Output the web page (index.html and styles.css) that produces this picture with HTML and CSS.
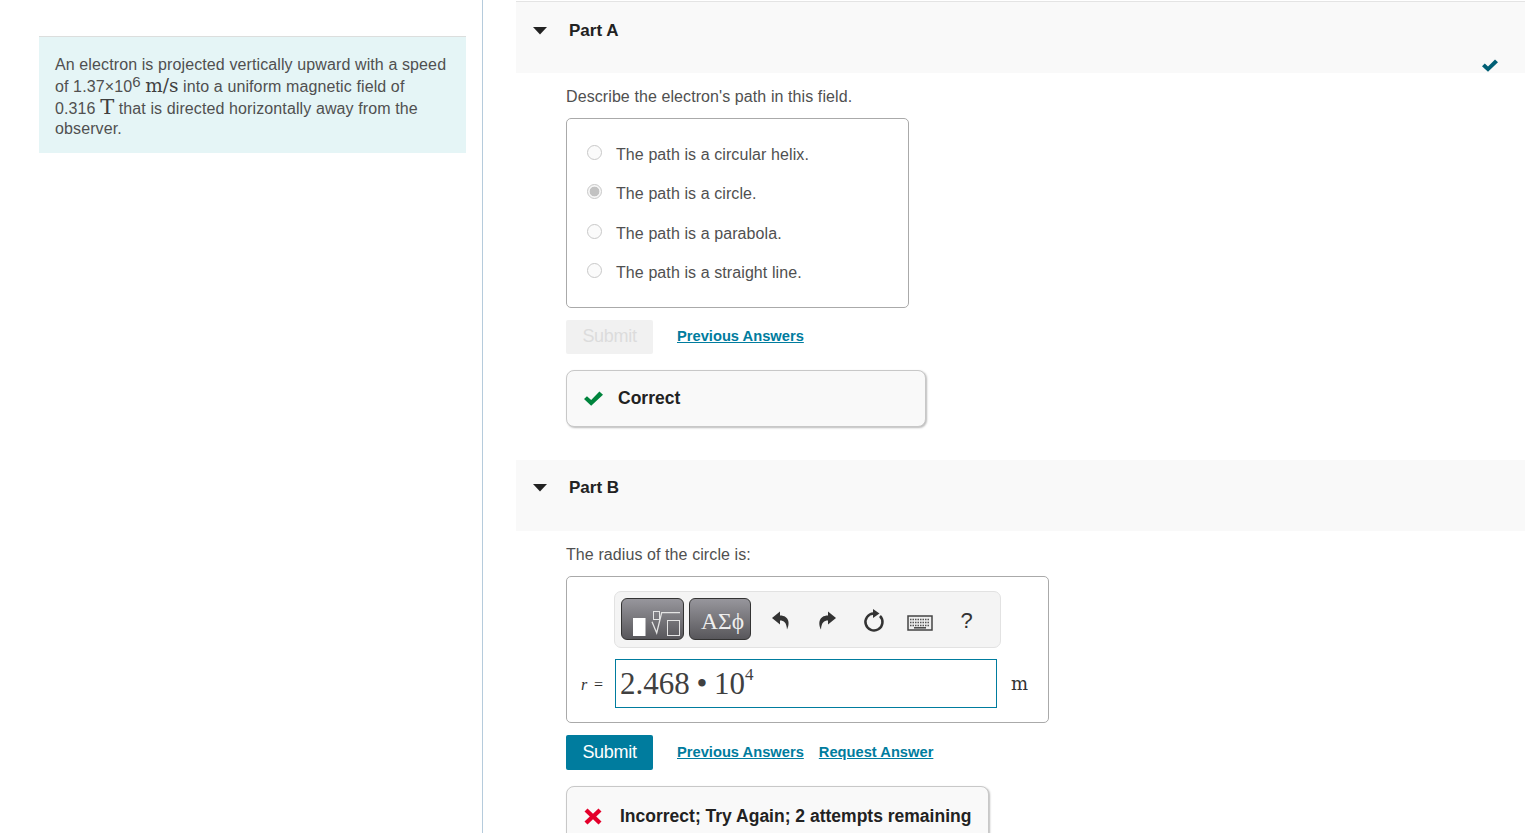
FILE: index.html
```html
<!DOCTYPE html>
<html lang="en">
<head>
<meta charset="utf-8">
<title>Electron in a magnetic field</title>
<link rel="stylesheet" href="styles.css">
</head>
<body>
<div class="page">
  <aside class="intro-col">
    <div class="intro">An electron is projected vertically upward with a speed of 1.37×10<span class="pow">6</span> <span class="unit">m/s</span> into a uniform magnetic field of 0.316 <span class="unit tall">T</span> that is directed horizontally away from the observer.</div>
  </aside>
  <main class="parts">
    <section class="part part-a">
      <header class="part-head">
        <svg class="caret" viewBox="0 0 14 8"><path d="M0 0H14L7 7.500Z"/></svg>
        <h2 class="part-title">Part A</h2>
        <svg class="done" viewBox="0 0 16 13"><path d="M0 7.200L2.800 4.400L6 7.400L13 0.400L16 3.200L6 12.800Z"/></svg>
      </header>
      <div class="part-body">
        <p class="prompt">Describe the electron's path in this field.</p>
        <div class="choices">
          <div class="choice"><span class="radio"></span><span>The path is a circular helix.</span></div>
          <div class="choice"><span class="radio on"></span><span>The path is a circle.</span></div>
          <div class="choice"><span class="radio"></span><span>The path is a parabola.</span></div>
          <div class="choice"><span class="radio"></span><span>The path is a straight line.</span></div>
        </div>
        <div class="actions">
          <span class="btn btn-off">Submit</span>
          <a class="link" href="#">Previous Answers</a>
        </div>
        <div class="feedback ok">
          <svg class="fb-icon" viewBox="0 0 18 14"><path d="M0 7.500L2.800 4.800L6.800 8.400L14.600 0.400L18 3.400L6.800 13.800Z"/></svg>
          <span>Correct</span>
        </div>
      </div>
    </section>
    <section class="part part-b">
      <header class="part-head">
        <svg class="caret" viewBox="0 0 14 8"><path d="M0 0H14L7 7.500Z"/></svg>
        <h2 class="part-title">Part B</h2>
      </header>
      <div class="part-body">
        <p class="prompt">The radius of the circle is:</p>
        <div class="answer">
          <div class="toolbar">
            <span class="tool tool-tpl">
              <svg class="tpl-icon" viewBox="0 0 48 26">
                <rect x="0" y="7" width="12.500" height="18" fill="#fff"/>
                <rect x="20.500" y="0.500" width="6" height="8" fill="none" stroke="#e4e4e4"/>
                <path d="M19 10.700L23.700 22L28.700 1.700H47" fill="none" stroke="#e4e4e4" stroke-width="1.300"/>
                <rect x="34.500" y="9.500" width="12" height="15" fill="none" stroke="#e4e4e4"/>
              </svg>
            </span>
            <span class="tool tool-sym">ΑΣϕ</span>
            <span class="icons">
              <span class="ico"><svg width="18" height="19" viewBox="0 0 18 19"><path d="M8 0.500L0 7L8 13.500V9.500C12 9.500 14.500 11.500 15 18.500C18 13 17.500 4.500 8 4.500Z"/></svg></span>
              <span class="ico"><svg width="18" height="19" viewBox="0 0 18 19"><path d="M10 0.500L18 7L10 13.500V9.500C6 9.500 3.500 11.500 3 18.500C0 13 0.500 4.500 10 4.500Z"/></svg></span>
              <span class="ico"><svg width="22" height="24" viewBox="0 0 22 24"><path d="M17 7A8.500 8.500 0 1 1 10.500 4.500" fill="none" stroke="#333" stroke-width="2.500"/><path d="M10 0L16.500 4.500L10 9Z"/></svg></span>
              <span class="ico ico-kbd"><svg width="26" height="16" viewBox="0 0 26 16"><rect x="1" y="1" width="24" height="14" fill="#eee" stroke="#444" stroke-width="1.500"/><path d="M3 4.500H23M3 7.500H23M3 10.500H23" fill="none" stroke="#555" stroke-width="1.500" stroke-dasharray="1.500 1"/><path d="M7 12.800H19" stroke="#444" stroke-width="1.500"/></svg></span>
              <span class="ico ico-help">?</span>
            </span>
          </div>
          <div class="answer-row">
            <span class="var"><i>r</i> =</span>
            <div class="input">2.468 • 10<span class="exp">4</span></div>
            <span class="answer-unit">m</span>
          </div>
        </div>
        <div class="actions actions-b">
          <span class="btn btn-on">Submit</span>
          <a class="link" href="#">Previous Answers</a>
          <a class="link" href="#">Request Answer</a>
        </div>
        <div class="feedback bad">
          <svg class="fb-icon" viewBox="0 0 18 17"><path d="M0.500 3.500L3.500 0.500L9 5.800L14.500 0.500L17.500 3.500L12.200 8.500L17.500 13.500L14.500 16.500L9 11.200L3.500 16.500L0.500 13.500L5.800 8.500Z"/></svg>
          <span>Incorrect; Try Again; 2 attempts remaining</span>
        </div>
      </div>
    </section>
  </main>
</div>
</body>
</html>
```
FILE: styles.css
```css
html, body {
  margin: 0;
  height: 100%;
  overflow: hidden;
  background: #fff;
}
body {
  font-family: "Liberation Sans", Arial, sans-serif;
  font-size: 16px;
  color: #505050;
  letter-spacing: 0.09px;
}
.page {
  display: flex;
  height: 833px;
  overflow: hidden;
}
.intro-col {
  box-sizing: border-box;
  width: 483px;
  flex: none;
  padding: 36px 16px 0 39px;
  border-right: 1px solid #b5cbdc;
}
.intro {
  background: #e5f5f6;
  border-top: 1px solid #dcdedd;
  padding: 18px 19px 14px 16px;
  line-height: 20px;
  height: 84px;
  letter-spacing: 0.11px;
}
.pow {
  display: inline-block;
  font-size: 15px;
  line-height: 14px;
  vertical-align: 5px;
}
.unit {
  font-family: "DejaVu Serif", serif;
  font-size: 18.500px;
  line-height: 14px;
  letter-spacing: 0;
  color: #3f3f3f;
}
.tall {
  display: inline-block;
  line-height: 20px;
  font-size: 21px;
}
.parts {
  flex: none;
  width: 1009px;
  margin-left: 33px;
}
.part-head {
  position: relative;
  display: flex;
  align-items: flex-start;
  background: #f9f9f9;
  height: 71px;
}
.part-a .part-head {
  border-top: 1px solid #e4e4e4;
  margin-top: 1px;
}
.part-b {
  margin-top: 33px;
}
.caret {
  width: 14px;
  height: 8px;
  margin: 25px 0 0 17px;
  fill: #222;
}
.part-title {
  margin: 18px 0 0 22px;
  font-size: 17px;
  line-height: 22px;
  font-weight: bold;
  letter-spacing: 0;
  color: #222;
}
.part-b .part-title {
  margin-top: 17px;
}
.part-b .caret {
  margin-top: 24px;
}
.done {
  position: absolute;
  right: 27px;
  top: 57px;
  width: 16px;
  height: 13px;
  fill: #005f75;
}
.part-body {
  padding-left: 50px;
}
.prompt {
  margin: 0;
  padding-top: 14px;
  line-height: 20px;
  height: 31px;
}
.choices {
  box-sizing: border-box;
  width: 343px;
  height: 190px;
  padding-top: 26px;
  border: 1px solid #aaa;
  border-radius: 5px;
}
.choice {
  display: flex;
  align-items: flex-start;
  height: 39.330px;
  padding-left: 20px;
  line-height: 20px;
  gap: 14px;
}
.radio {
  box-sizing: border-box;
  flex: none;
  width: 15px;
  height: 15px;
  border: 1px solid #c8c8c8;
  border-radius: 50%;
  background: #fbfbfb;
}
.radio.on {
  background: radial-gradient(circle, #c2c2c2 0 4.500px, #f6f6f6 5.200px);
}
.actions {
  display: flex;
  align-items: center;
  height: 34px;
  margin-top: 12px;
}
.btn {
  box-sizing: border-box;
  width: 87px;
  height: 34px;
  line-height: 32px;
  text-align: center;
  font-size: 18px;
  border-radius: 2px;
  margin-right: 24px;
  letter-spacing: -0.300px;
}
.btn-off {
  background: #f1f1f1;
  color: #dcdcdc;
}
.btn-on {
  background: #007c9e;
  color: #fff;
  height: 35px;
  line-height: 34px;
}
.link {
  color: #007c9e;
  font-size: 14.700px;
  font-weight: bold;
  letter-spacing: 0;
  margin-right: 15px;
  margin-bottom: 2px;
}
.feedback {
  box-sizing: border-box;
  display: flex;
  align-items: center;
  margin-top: 16px;
  height: 57px;
  width: 360px;
  padding-left: 17px;
  background: #f9f9f9;
  border: 1px solid #c8c8c8;
  border-radius: 8px;
  box-shadow: 1px 1px 2px #bbb;
  font-size: 17.500px;
  font-weight: bold;
  letter-spacing: 0;
  color: #222;
}
.ok .fb-icon {
  width: 19px;
  height: 15px;
  margin-right: 15px;
  fill: #00843d;
}
.bad {
  width: 423px;
  height: 60px;
}
.bad .fb-icon {
  width: 18px;
  height: 17px;
  margin-right: 18px;
  fill: #e4002b;
}
.answer {
  box-sizing: border-box;
  width: 483px;
  height: 147px;
  padding: 14px 0 0 47px;
  border: 1px solid #aaa;
  border-radius: 5px;
}
.toolbar {
  box-sizing: border-box;
  display: flex;
  align-items: center;
  width: 387px;
  height: 57px;
  padding: 0 0 2px 6px;
  gap: 5px;
  background: #f4f4f4;
  border: 1px solid #e2e2e2;
  border-radius: 7px;
}
.tool {
  box-sizing: border-box;
  display: flex;
  height: 42px;
  border: 1px solid #333;
  border-radius: 6px;
  background: linear-gradient(#97969c, #58575b);
}
.tool-tpl {
  width: 63px;
  padding: 12px 0 0 11px;
}
.tpl-icon {
  flex: none;
  width: 48px;
  height: 26px;
}
.tool-sym {
  width: 62px;
  padding: 7px 0 0 11px;
  font-family: "Liberation Serif", serif;
  font-size: 23.500px;
  line-height: 30px;
  letter-spacing: 0;
  color: #eee;
}
.icons {
  display: flex;
  align-items: center;
  margin: 4px 0 0 1.500px;
}
.ico {
  display: flex;
  justify-content: center;
  width: 46.500px;
  fill: #333;
}
.ico-kbd {
  padding-top: 5px;
}
.ico-help {
  font-size: 22px;
  color: #333;
}
.answer-row {
  display: flex;
  align-items: center;
  margin: 11px 0 0 -33px;
}
.var {
  width: 34px;
  padding-top: 2px;
  font-family: "Liberation Serif", serif;
  font-size: 16px;
  word-spacing: 2px;
  letter-spacing: 0.400px;
  color: #333;
}
.input {
  box-sizing: border-box;
  width: 382px;
  height: 49px;
  padding-left: 4px;
  border: 1px solid #007c9e;
  font-family: "Liberation Serif", serif;
  font-size: 31px;
  line-height: 48px;
  word-spacing: -1px;
  letter-spacing: 0;
  color: #404040;
}
.exp {
  display: inline-block;
  font-size: 17px;
  line-height: 17px;
  vertical-align: 14px;
}
.answer-unit {
  margin-left: 14px;
  font-family: "DejaVu Serif", serif;
  font-size: 18px;
  letter-spacing: 0;
  color: #333;
}
.actions-b {
  margin-top: 12px;
  height: 35px;
}
```
